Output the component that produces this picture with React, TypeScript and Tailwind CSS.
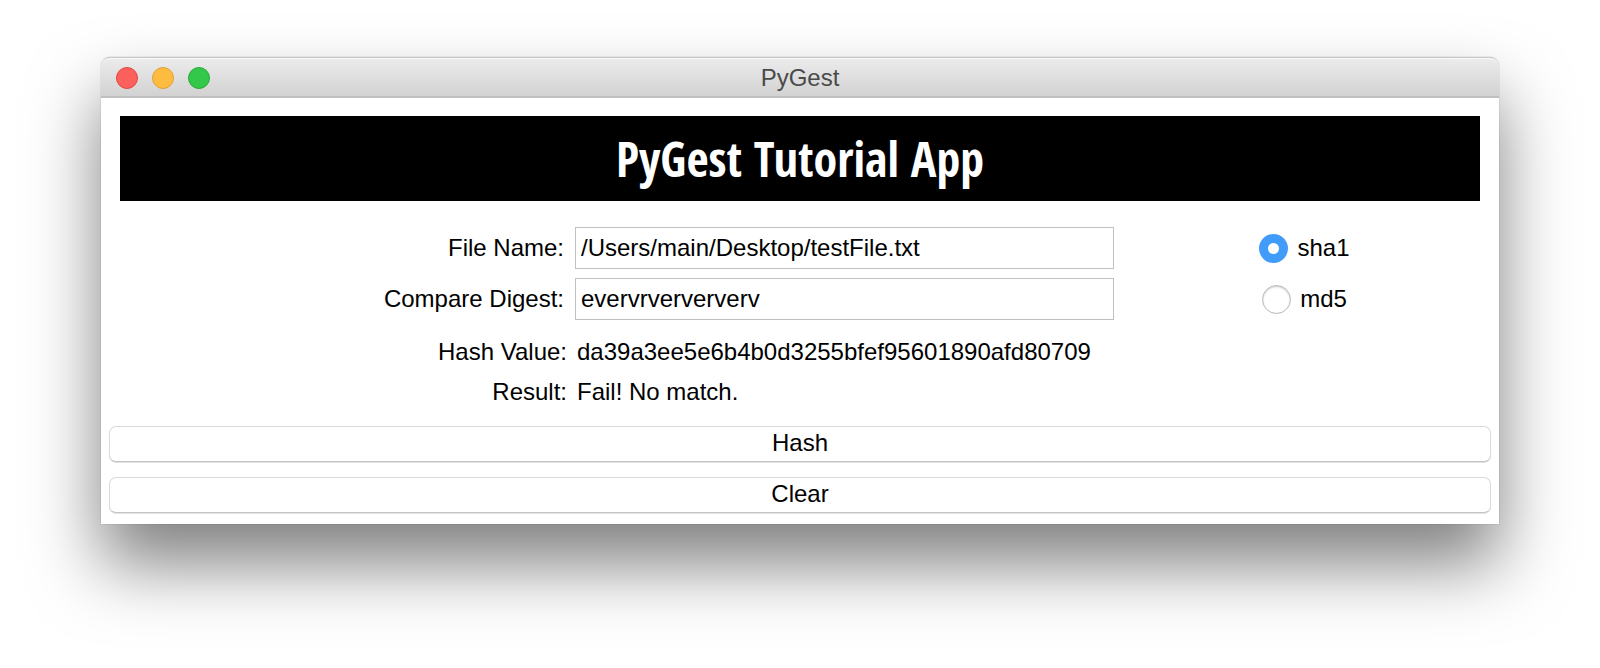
import { useState } from "react";

const buttonClass =
  "h-9 w-full rounded-[7px] border border-[#dadada] border-b-[#c4c4c4] bg-white pb-[2px] leading-none shadow-[0_1px_0_#e2e2e2]";
const inputClass =
  "h-[42px] w-full border border-[#c0c0c0] bg-white pl-[5px] pr-1 outline-none";
const labelClass = "pr-[11px] text-right";
const radioClass =
  "size-[29px] appearance-none rounded-full border border-[#b9b9b9] bg-white shadow-[inset_0_1px_2px_rgba(0,0,0,0.2)] checked:border-[9px] checked:border-[#419bf9] checked:shadow-none";

function TrafficLights() {
  return (
    <div className="absolute left-[15px] top-[9px] flex gap-[14px]">
      <button aria-label="Close" className="size-[22px] rounded-full border border-[#e2463f] bg-[#fc605c]" />
      <button aria-label="Minimize" className="size-[22px] rounded-full border border-[#dfa033] bg-[#fdbc40]" />
      <button aria-label="Zoom" className="size-[22px] rounded-full border border-[#27aa35] bg-[#34c84a]" />
    </div>
  );
}

export default function App() {
  const [fileName, setFileName] = useState("/Users/main/Desktop/testFile.txt");
  const [digest, setDigest] = useState("evervrverververv");
  const [algorithm, setAlgorithm] = useState("sha1");

  const radio = (name: string) => (
    <div className="flex justify-center pr-1">
      <label className="flex items-center gap-[9px]">
        <input
          type="radio"
          name="algorithm"
          value={name}
          checked={algorithm === name}
          onChange={() => setAlgorithm(name)}
          className={radioClass}
        />
        <span>{name}</span>
      </label>
    </div>
  );

  return (
    <div className="min-h-screen overflow-hidden bg-white px-[101px] pb-36 pt-[57px] font-['Liberation_Sans',Arial,sans-serif] text-2xl text-black">
      <main className="rounded-t-[9px] bg-white shadow-[0_0_1px_rgba(0,0,0,0.5),0_40px_70px_rgba(0,0,0,0.5)]">
        <header className="relative flex h-[41px] items-center justify-center rounded-t-[9px] border-b-2 border-t border-b-[#bfbfbf] border-t-[#c6c6c6] bg-linear-to-b from-[#ececec] to-[#d2d2d2] pt-[2px] shadow-[inset_0_1px_0_#fafafa]">
          <TrafficLights />
          <span className="text-[#4a4a4a]">PyGest</span>
        </header>

        <div className="px-[19px] pt-[18px]">
          <h1 className="flex h-[85px] items-center justify-center bg-black font-['Open_Sans_Condensed','Roboto_Condensed','Liberation_Sans',sans-serif] text-[48px] font-bold leading-none text-white">
            PyGest Tutorial App
          </h1>
        </div>

        <form onSubmit={(e) => e.preventDefault()}>
          <div className="grid grid-cols-[474fr_539fr_385fr] items-center gap-y-[9px] pt-[26px]">
            <label htmlFor="file" className={labelClass}>File Name:</label>
            <input id="file" type="text" value={fileName} onChange={(e) => setFileName(e.target.value)} className={inputClass} />
            {radio("sha1")}
            <label htmlFor="digest" className={labelClass}>Compare Digest:</label>
            <input id="digest" type="text" value={digest} onChange={(e) => setDigest(e.target.value)} className={inputClass} />
            {radio("md5")}
          </div>

          <dl className="grid grid-cols-[474fr_924fr] pb-[14px] pt-3 leading-10">
            <dt className="pr-2 text-right">Hash Value:</dt>
            <dd className="pl-[2px]">da39a3ee5e6b4b0d3255bfef95601890afd80709</dd>
            <dt className="pr-2 text-right">Result:</dt>
            <dd className="pl-[2px]">Fail! No match.</dd>
          </dl>

          <div className="flex flex-col gap-[15px] px-2 pb-[11px]">
            <button type="submit" className={buttonClass}>Hash</button>
            <button type="button" className={buttonClass}>Clear</button>
          </div>
        </form>
      </main>
    </div>
  );
}
